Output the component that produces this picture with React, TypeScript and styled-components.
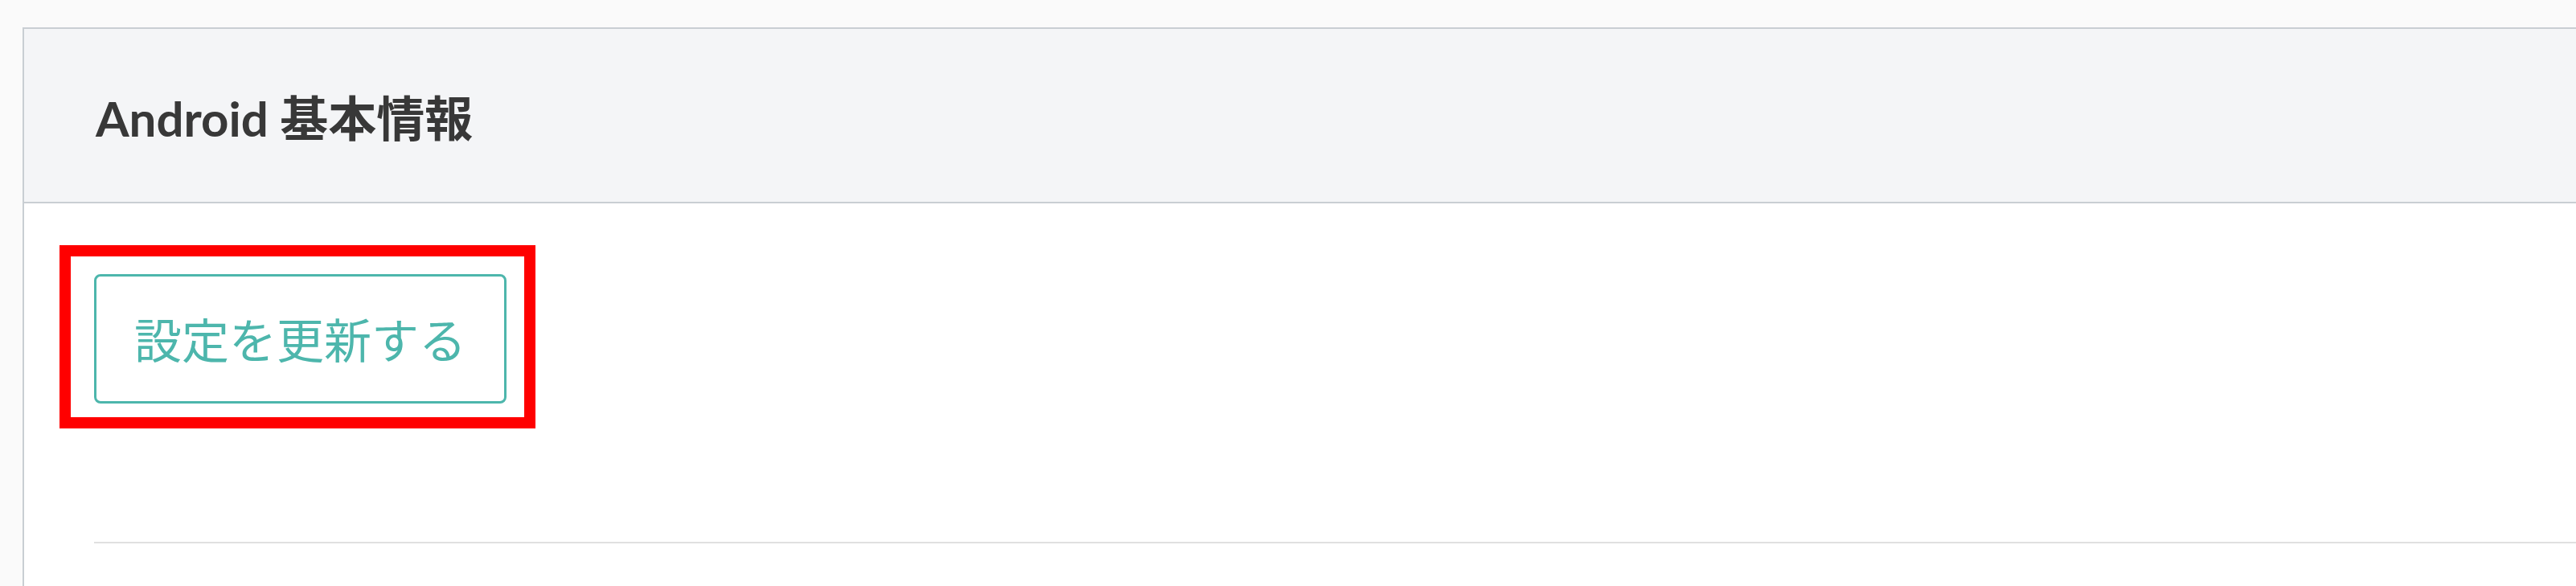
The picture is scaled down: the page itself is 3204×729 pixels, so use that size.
import React from "react";
import styled, {createGlobalStyle} from "styled-components";

const GlobalStyle = createGlobalStyle`
  html, body {
    margin: 0;
    padding: 0;
    background: #fafafa;
    font-family: Lato, "Noto Sans CJK JP", sans-serif;
  }
`
const Page = styled.div`
  padding: 34px 0 0 28px;
  overflow: hidden;
  min-height: 729px;
  box-sizing: border-box;
`
const Card = styled.section`
  margin-right: -20px;
  background: #fff;
  border-top: 2px solid #c9ced3;
  border-left: 2px solid #c9ced3;
  min-height: 695px;
`
const CardHeader = styled.header`
  display: flex;
  align-items: center;
  height: 215px;
  padding-left: 89px;
  background: #f4f5f7;
  border-bottom: 2px solid #c9ced3;
`
const Title = styled.h2`
  margin: 0;
  font-family: Lato, "Noto Sans CJK JP", sans-serif;
  font-weight: 700;
  font-size: 60px;
  color: #383838;
`
const CardBody = styled.div`
  padding: 52px 0 0 87px;
`
const Highlight = styled.div`
  display: inline-block;
  margin-left: -43px;
  padding: 22px 22px 17px 29px;
  border: 14px solid #ff0000;
`
const OutlineButton = styled.button`
  display: block;
  padding: 33px 47px;
  background: #fff;
  border: 3px solid #4db6ac;
  border-radius: 8px;
  color: #4db6ac;
  font-family: "Noto Sans CJK JP", sans-serif;
  font-size: 59px;
  font-weight: 400;
  line-height: 1.5;
  cursor: pointer;
`
const Divider = styled.hr`
  margin: 141px 0 0;
  border: none;
  border-top: 2px solid #e0e0e0;
`

const App = () => {
    return (
        <>
            <GlobalStyle/>
            <Page>
                <Card>
                    <CardHeader>
                        <Title>Android 基本情報</Title>
                    </CardHeader>
                    <CardBody>
                        <Highlight>
                            <OutlineButton>設定を更新する</OutlineButton>
                        </Highlight>
                        <Divider/>
                    </CardBody>
                </Card>
            </Page>
        </>
    )
}
export default App;
